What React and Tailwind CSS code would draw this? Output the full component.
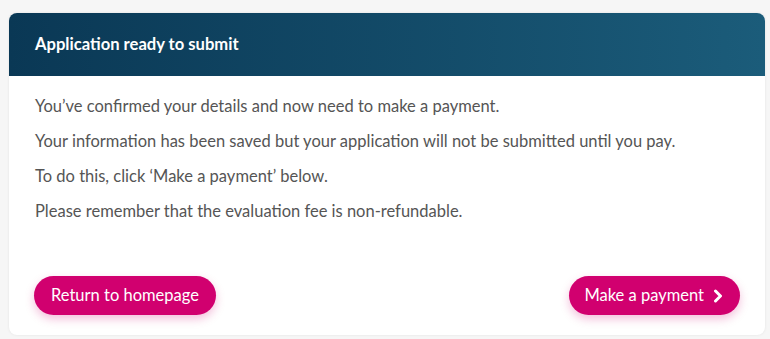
import React from "react";

export default function App() {
  return (
    <div className="min-h-[339px] w-[770px] bg-[#f6f6f6] pt-[13px] pl-[9px] pr-[5px] pb-[4px]" style={{ fontFamily: "Lato, 'Noto Sans', sans-serif" }}>
      <div className="w-[756px] h-[322px] rounded-[8px] bg-white shadow-[0_0_3px_rgba(0,0,0,0.08)] overflow-hidden flex flex-col">
        <div className="h-[63px] flex items-center px-[26px] bg-gradient-to-r from-[#0a3855] to-[#1b5c7a]">
          <h1 className="text-white text-[16.6px] font-bold">Application ready to submit</h1>
        </div>
        <div className="flex-1 flex flex-col pl-[25px] pr-[25px] pt-[20px] pb-[20px]">
          <div className="flex flex-col gap-[15px] pl-[1px] text-[16.5px] leading-[20px] text-[#555555]">
            <p>You’ve confirmed your details and now need to make a payment.</p>
            <p>Your information has been saved but your application will not be submitted until you pay.</p>
            <p>To do this, click ‘Make a payment’ below.</p>
            <p>Please remember that the evaluation fee is non-refundable.</p>
          </div>
          <div className="mt-auto flex justify-between items-center">
            <button className="h-[39px] px-[17px] rounded-full bg-[#d1006f] text-white text-[16.5px] shadow-[0_4px_10px_rgba(209,0,111,0.25)]">
              Return to homepage
            </button>
            <button className="h-[39px] pl-[15px] pr-[17px] rounded-full bg-[#d1006f] text-white text-[16.5px] shadow-[0_4px_10px_rgba(209,0,111,0.25)] flex items-center gap-[9px]">
              Make a payment
              <svg width="10" height="14" viewBox="0 0 10 14" fill="none" stroke="white" strokeWidth="3" strokeLinecap="round" strokeLinejoin="round">
                <path d="M2.5 2 L7.5 7 L2.5 12" />
              </svg>
            </button>
          </div>
        </div>
      </div>
    </div>
  );
}
